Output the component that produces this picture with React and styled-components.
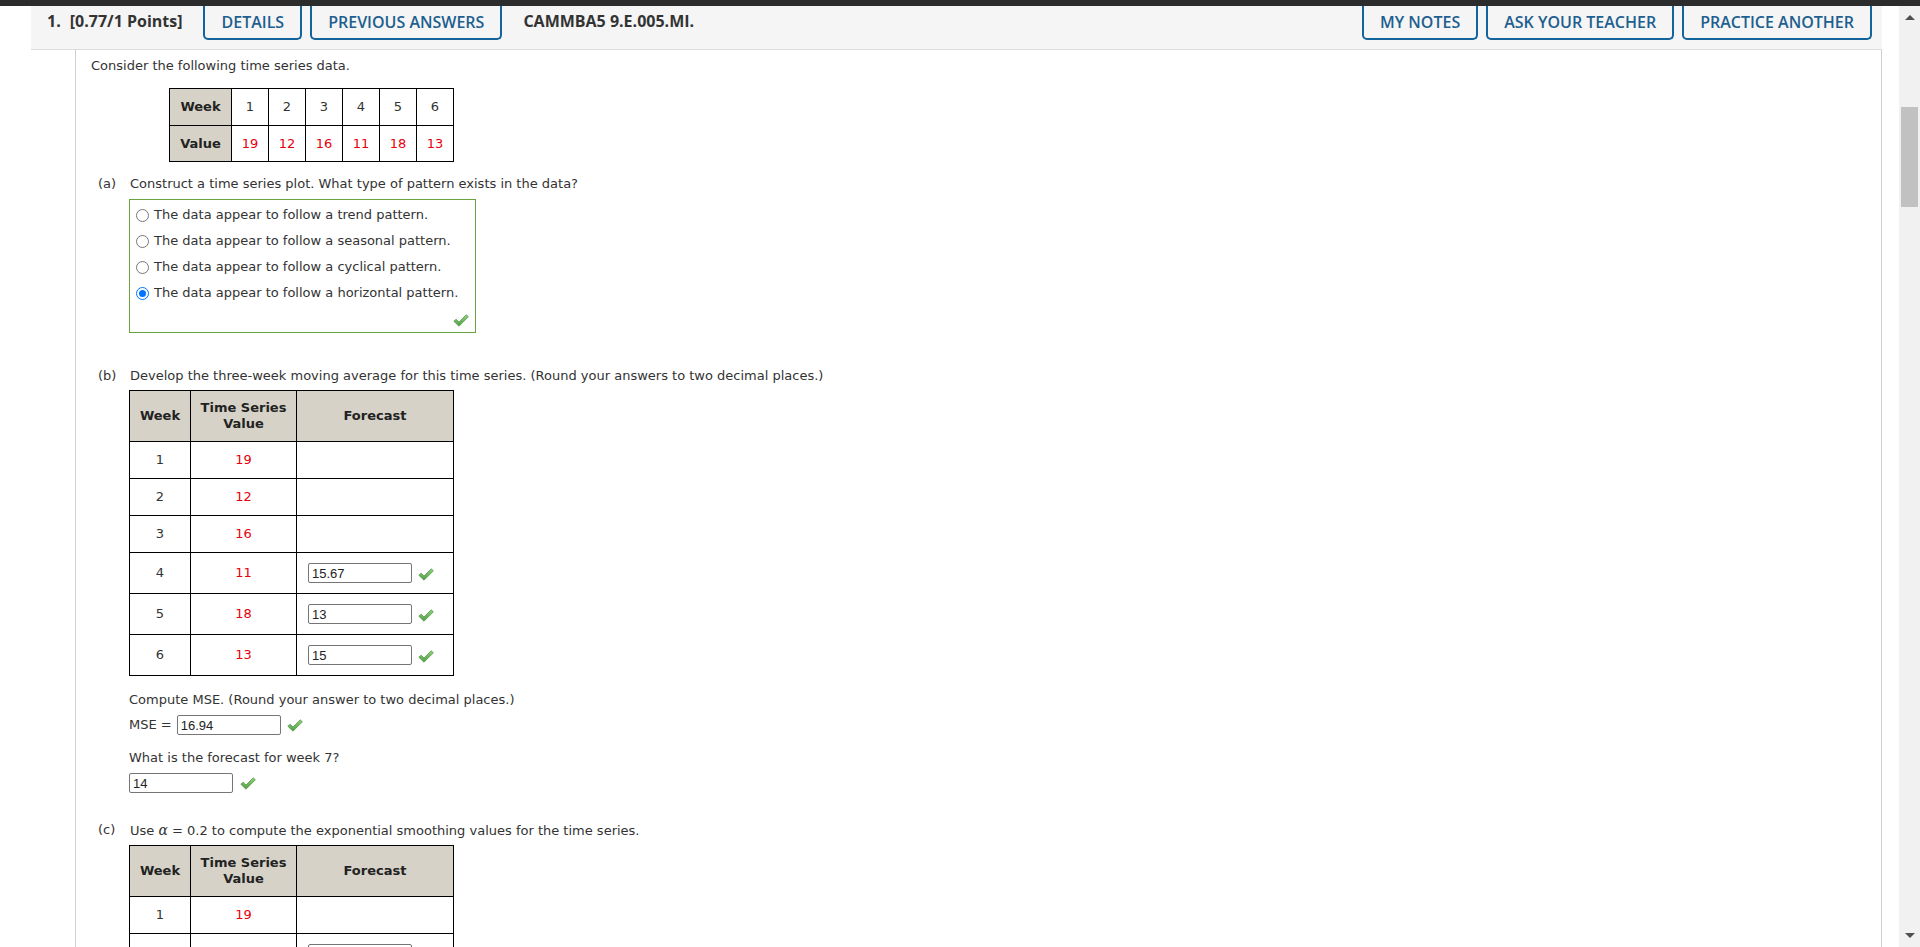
import React from 'react';
import styled, { createGlobalStyle } from 'styled-components';

const GlobalStyle = createGlobalStyle`
  html, body {
    margin: 0;
    padding: 0;
    background: #fff;
  }
  body {
    font-family: "DejaVu Sans", Verdana, sans-serif;
    font-size: 13px;
    color: #333;
  }
`;

const Page = styled.div`
  height: 947px;
  overflow: hidden;
  display: flex;
  flex-direction: column;
`;

const TopBar = styled.div`
  height: 6px;
  flex: none;
  background: #2c2c2c;
`;

const Body = styled.div`
  flex: 1;
  display: flex;
  min-height: 0;
`;

const Main = styled.div`
  flex: 1;
  padding: 0 17px 0 31px;
  display: flex;
  flex-direction: column;
  min-width: 0;
`;

const Header = styled.div`
  height: 43px;
  flex: none;
  display: flex;
  align-items: flex-start;
  gap: 8px;
  padding: 0 10px 0 16px;
  background: #f5f5f5;
  border-bottom: 1px solid #dcdcdc;
  font-family: "Open Sans", sans-serif;
  font-size: 16px;
  font-weight: 600;
`;

const Title = styled.div`
  line-height: 30px;
  color: #333;
  font-weight: 700;
  margin-right: ${(p) => p.$gap || 0}px;
  margin-left: ${(p) => p.$left || 0}px;
  white-space: nowrap;
`;

const Number = styled.span`
  margin-right: 9px;
`;

const Spacer = styled.div`
  flex: 1;
`;

const TabButton = styled.button`
  height: 34px;
  box-sizing: border-box;
  margin: 0;
  padding: 0 16px;
  line-height: 30px;
  border: 2px solid #13649c;
  border-top: 0;
  border-radius: 0 0 5px 5px;
  background: transparent;
  color: #1d5f8f;
  font-family: "Open Sans", sans-serif;
  font-size: 16px;
  font-weight: 600;
  white-space: nowrap;
  cursor: pointer;
`;

const Panel = styled.div`
  flex: 1;
  margin-left: 44px;
  border-left: 1px solid #d0d0d0;
  border-right: 1px solid #d0d0d0;
  padding: 7px 0 0 15px;
  line-height: 18px;
`;

const Para = styled.div`
  margin-top: ${(p) => p.$top || 0}px;
`;

const PartLine = styled.div`
  display: flex;
  margin-top: ${(p) => p.$top || 0}px;
  margin-left: 7px;
`;

const PartLabel = styled.span`
  width: 32px;
  flex: none;
`;

const Indent = styled.div`
  margin-left: 38px;
`;

const Grid = styled.table`
  border-collapse: collapse;
  margin-top: ${(p) => p.$top || 0}px;
  margin-left: ${(p) => p.$left || 0}px;
  border: 1px solid #000;
  font-size: 13px;
`;

const HeadCell = styled.th`
  background: #d6d2c8;
  border: 1px solid #000;
  color: #222;
  font-weight: 700;
  width: ${(p) => p.$w}px;
  height: ${(p) => p.$h}px;
  padding: 0;
  line-height: 16px;
  text-align: center;
`;

const Cell = styled.td`
  border: 1px solid #000;
  width: ${(p) => p.$w || 'auto'}px;
  height: ${(p) => p.$h}px;
  padding: 0;
  text-align: center;
  color: ${(p) => (p.$red ? '#e8000b' : '#333')};
`;

const InputCell = styled.td`
  border: 1px solid #000;
  height: ${(p) => p.$h}px;
  padding: 0 0 0 11px;
  text-align: left;
`;

const ChoiceBox = styled.div`
  width: 345px;
  border: 1px solid #6ba33e;
  padding-top: 2px;
  margin-top: 6px;
`;

const Choice = styled.label`
  display: flex;
  align-items: center;
  height: 26px;
  padding-left: 6px;
`;

const Radio = styled.span`
  width: 13px;
  height: 13px;
  box-sizing: border-box;
  border-radius: 50%;
  border: 1px solid ${(p) => (p.$on ? '#0075ff' : '#767676')};
  margin-right: 5px;
  display: flex;
  align-items: center;
  justify-content: center;
  &::after {
    content: '';
    display: ${(p) => (p.$on ? 'block' : 'none')};
    width: 7px;
    height: 7px;
    border-radius: 50%;
    background: #0075ff;
  }
`;

const BoxFoot = styled.div`
  height: 26px;
  display: flex;
  justify-content: flex-end;
  align-items: flex-start;
  padding: 8px 6px 0 0;
  box-sizing: border-box;
`;

const AnswerRow = styled.div`
  display: flex;
  align-items: center;
  height: 20px;
  margin-top: ${(p) => p.$top || 0}px;
`;

const Field = styled.input`
  width: 104px;
  height: 20px;
  box-sizing: border-box;
  border: 1px solid #767676;
  border-radius: 2px;
  padding: 0 3px;
  font-family: "Liberation Sans", Arial, sans-serif;
  font-size: 13px;
  color: #222;
  background: #fff;
  margin-left: ${(p) => p.$left || 0}px;
`;

const Mark = styled.span`
  display: inline-flex;
  margin-left: ${(p) => p.$left ?? 6}px;
  vertical-align: middle;
`;

const Greek = styled.i`
  font-family: "DejaVu Serif", "Liberation Serif", serif;
  font-size: 14px;
`;

const ScrollTrack = styled.div`
  width: 21px;
  flex: none;
  background: #f1f1f1;
  display: flex;
  flex-direction: column;
  align-items: center;
`;

const Arrow = styled.div`
  width: 0;
  height: 0;
  margin: ${(p) => (p.$down ? 'auto 0 9px' : '9px 0 0')};
  border-left: 5px solid transparent;
  border-right: 5px solid transparent;
  ${(p) => (p.$down ? 'border-top: 5px solid #505050;' : 'border-bottom: 5px solid #505050;')}
`;

const Thumb = styled.div`
  width: 17px;
  height: 100px;
  margin-top: 87px;
  background: #c1c1c1;
`;

function Check({ left }) {
  return (
    <Mark $left={left}>
      <svg width="16" height="13" viewBox="0 0 16 13">
        <defs>
          <linearGradient id="ck" x1="0" y1="0" x2="0" y2="1">
            <stop offset="0" stopColor="#8fd27f" />
            <stop offset="1" stopColor="#4f9d43" />
          </linearGradient>
        </defs>
        <path
          d="M0.8 7.2 L3.2 5.2 L6 8 L13.2 0.8 L15.4 2.8 L6 12.2 Z"
          fill="url(#ck)"
          stroke="#5a9a4c"
          strokeWidth="0.8"
          strokeLinejoin="round"
        />
      </svg>
    </Mark>
  );
}

const weeks = [1, 2, 3, 4, 5, 6];
const values = [19, 12, 16, 11, 18, 13];
const choices = [
  'The data appear to follow a trend pattern.',
  'The data appear to follow a seasonal pattern.',
  'The data appear to follow a cyclical pattern.',
  'The data appear to follow a horizontal pattern.',
];
const forecasts = [null, null, null, '15.67', '13', '15'];

function ForecastHead() {
  return (
    <tr>
      <HeadCell $w={60} $h={50}>Week</HeadCell>
      <HeadCell $w={105} $h={50}>
        Time Series
        <br />
        Value
      </HeadCell>
      <HeadCell $w={156} $h={50}>Forecast</HeadCell>
    </tr>
  );
}

export default function App() {
  return (
    <Page>
      <GlobalStyle />
      <TopBar />
      <Body>
        <Main>
          <Header>
            <Title $gap={13}>
              <Number>1.</Number>[0.77/1 Points]
            </Title>
            <TabButton>DETAILS</TabButton>
            <TabButton>PREVIOUS ANSWERS</TabButton>
            <Title $left={13}>CAMMBA5 9.E.005.MI.</Title>
            <Spacer />
            <TabButton>MY NOTES</TabButton>
            <TabButton>ASK YOUR TEACHER</TabButton>
            <TabButton>PRACTICE ANOTHER</TabButton>
          </Header>

          <Panel>
            <Para>Consider the following time series data.</Para>
            <Grid $top={13} $left={78}>
              <tbody>
                <tr>
                  <HeadCell $w={61} $h={36}>Week</HeadCell>
                  {weeks.map((w) => (
                    <Cell key={w} $w={36} $h={36}>{w}</Cell>
                  ))}
                </tr>
                <tr>
                  <HeadCell $w={61} $h={35}>Value</HeadCell>
                  {values.map((v, i) => (
                    <Cell key={i} $w={36} $h={35} $red>{v}</Cell>
                  ))}
                </tr>
              </tbody>
            </Grid>

            <PartLine $top={13}>
              <PartLabel>(a)</PartLabel>
              Construct a time series plot. What type of pattern exists in the data?
            </PartLine>
            <Indent>
              <ChoiceBox>
                {choices.map((c, i) => (
                  <Choice key={c}>
                    <Radio $on={i === 3} />
                    {c}
                  </Choice>
                ))}
                <BoxFoot>
                  <Check left={0} />
                </BoxFoot>
              </ChoiceBox>
            </Indent>

            <PartLine $top={34}>
              <PartLabel>(b)</PartLabel>
              Develop the three-week moving average for this time series. (Round your answers to two decimal places.)
            </PartLine>
            <Indent>
              <Grid $top={5}>
                <tbody>
                  <ForecastHead />
                  {weeks.map((w, i) => {
                    const h = i < 3 ? 36 : 40;
                    return (
                      <tr key={w}>
                        <Cell $h={h}>{w}</Cell>
                        <Cell $h={h} $red>{values[i]}</Cell>
                        {forecasts[i] ? (
                          <InputCell $h={h}>
                            <Field defaultValue={forecasts[i]} />
                            <Check />
                          </InputCell>
                        ) : (
                          <Cell $h={h} />
                        )}
                      </tr>
                    );
                  })}
                </tbody>
              </Grid>

              <Para $top={15}>Compute MSE. (Round your answer to two decimal places.)</Para>
              <AnswerRow $top={6}>
                MSE =
                <Field $left={5} defaultValue="16.94" />
                <Check />
              </AnswerRow>
              <Para $top={14}>What is the forecast for week 7?</Para>
              <AnswerRow $top={6}>
                <Field defaultValue="14" />
                <Check left={7} />
              </AnswerRow>
            </Indent>

            <PartLine $top={28}>
              <PartLabel>(c)</PartLabel>
              <span>
                Use <Greek>α</Greek> = 0.2 to compute the exponential smoothing values for the time series.
              </span>
            </PartLine>
            <Indent>
              <Grid $top={5}>
                <tbody>
                  <ForecastHead />
                  <tr>
                    <Cell $h={36}>1</Cell>
                    <Cell $h={36} $red>19</Cell>
                    <Cell $h={36} />
                  </tr>
                  <tr>
                    <Cell $h={40} />
                    <Cell $h={40} />
                    <InputCell $h={40}>
                      <Field defaultValue="" />
                    </InputCell>
                  </tr>
                </tbody>
              </Grid>
            </Indent>
          </Panel>
        </Main>
        <ScrollTrack>
          <Arrow />
          <Thumb />
          <Arrow $down />
        </ScrollTrack>
      </Body>
    </Page>
  );
}
